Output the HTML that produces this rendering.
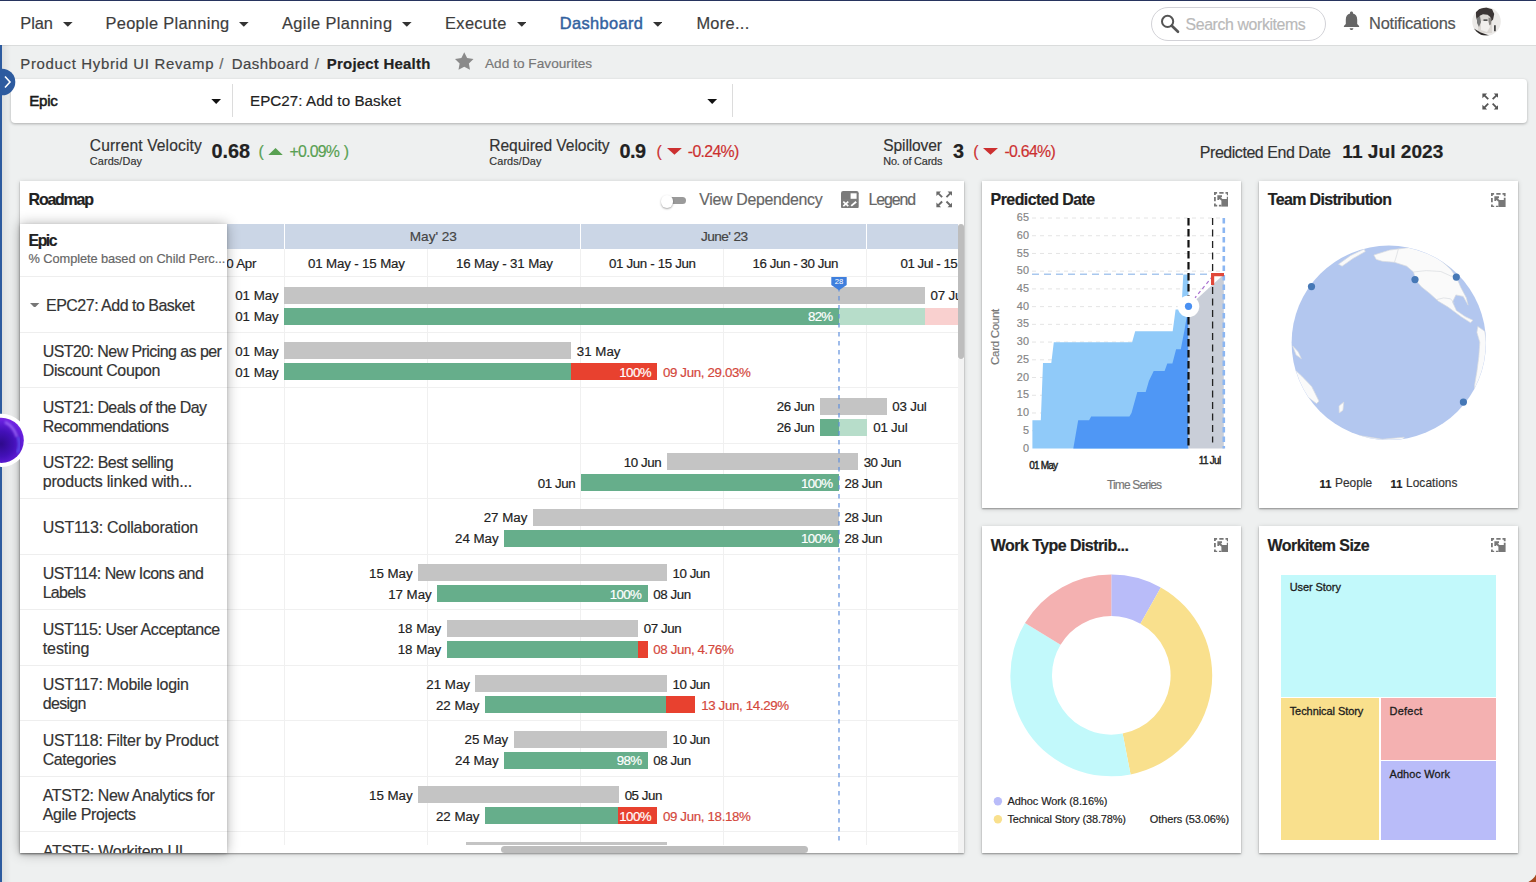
<!DOCTYPE html>
<html lang="en"><head><meta charset="utf-8"><title>Project Health - Dashboard</title><style>
html,body{margin:0;padding:0}
body{width:1536px;height:882px;overflow:hidden;position:relative;background:#eef0f0;font-family:"Liberation Sans",Arial,sans-serif;color:#333}
#page{position:absolute;left:0;top:0;width:1536px;height:882px;overflow:hidden}
#nav{position:absolute;left:0;top:0;width:1536px;height:44.500px;background:#fff;box-shadow:0 1px 0 #dadcdc}
.t{position:absolute;white-space:nowrap;line-height:1em;display:block;-webkit-text-stroke:.18px currentColor}
</style></head>
<body><div id="page">
<div id="nav">
<div style="position:absolute;left:0.00px;top:0.00px;width:1536.00px;height:1.30px;background:#27345e;"></div>
<span class="t" id="t1" style="top:15.42px;font-size:16.40px;left:20.30px;color:#3d3d3d;letter-spacing:-0.071px;">Plan</span>
<svg style="position:absolute;left:63.30px;top:22.00px" width="9.60" height="4.80" viewBox="0 0 10 5"><path d="M0 0H10L5 5Z" fill="#333"/></svg>
<span class="t" id="t2" style="top:15.42px;font-size:16.40px;left:105.50px;color:#3d3d3d;letter-spacing:0.308px;">People Planning</span>
<svg style="position:absolute;left:239.00px;top:22.00px" width="9.60" height="4.80" viewBox="0 0 10 5"><path d="M0 0H10L5 5Z" fill="#333"/></svg>
<span class="t" id="t3" style="top:15.42px;font-size:16.40px;left:282.00px;color:#3d3d3d;letter-spacing:0.400px;">Agile Planning</span>
<svg style="position:absolute;left:402.10px;top:22.00px" width="9.60" height="4.80" viewBox="0 0 10 5"><path d="M0 0H10L5 5Z" fill="#333"/></svg>
<span class="t" id="t4" style="top:15.42px;font-size:16.40px;left:445.10px;color:#3d3d3d;letter-spacing:0.328px;">Execute</span>
<svg style="position:absolute;left:516.70px;top:22.00px" width="9.60" height="4.80" viewBox="0 0 10 5"><path d="M0 0H10L5 5Z" fill="#333"/></svg>
<span class="t" id="t5" style="top:15.42px;font-size:16.40px;left:559.70px;color:#33629f;letter-spacing:0.389px;-webkit-text-stroke:0.45px currentColor;">Dashboard</span>
<svg style="position:absolute;left:652.90px;top:22.00px" width="9.60" height="4.80" viewBox="0 0 10 5"><path d="M0 0H10L5 5Z" fill="#333"/></svg>
<span class="t" id="t6" style="top:15.42px;font-size:16.40px;left:696.40px;color:#3d3d3d;letter-spacing:0.314px;">More...</span>
<div style="position:absolute;left:1151px;top:7px;width:175px;height:33.500px;border:1px solid #d2d2d7;border-radius:17px;box-sizing:border-box;background:#fff"></div>
<svg style="position:absolute;left:1159px;top:13px" width="22" height="22" viewBox="0 0 22 22"><circle cx="8.6" cy="8.4" r="5.6" fill="none" stroke="#555" stroke-width="2"/><path d="M12.8 12.7L19 18.8" stroke="#555" stroke-width="2.6" stroke-linecap="round"/></svg>
<span class="t" id="t7" style="top:16.55px;font-size:15.89px;left:1185.50px;color:#b9b9b9;letter-spacing:-0.390px;">Search workitems</span>
<svg style="position:absolute;left:1342px;top:10px" width="19" height="22" viewBox="0 0 19 22"><path d="M9.5 1.6c.9 0 1.5.6 1.5 1.4v.6c2.6.7 4.2 2.9 4.2 5.8v4.6l1.9 2v1H1.9v-1l1.9-2V9.400c0-2.900 1.600-5.100 4.200-5.800v-.6c0-.8.600-1.400 1.500-1.400z" fill="#666"/><path d="M7.700 18.200h3.600c0 1-.8 1.800-1.800 1.800s-1.800-.8-1.800-1.800z" fill="#666"/></svg>
<span class="t" id="t8" style="top:15.32px;font-size:16.40px;left:1369.00px;color:#555;letter-spacing:-0.207px;">Notifications</span>
<svg style="position:absolute;left:1472px;top:7px" width="29" height="29" viewBox="0 0 29 29"><defs><clipPath id="avc"><circle cx="14.500" cy="14.500" r="14.300"/></clipPath><filter id="avb" x="-20%" y="-20%" width="140%" height="140%"><feGaussianBlur stdDeviation=".75"/></filter></defs><g clip-path="url(#avc)"><rect width="29" height="29" fill="#eceae8"/><g filter="url(#avb)"><path d="M6 6h14v20H6z" fill="#dcd8d4"/><path d="M4.100 10.100L3.900 5 7.300 1.800 14.200.5 20.100 2.300 22.200 6.900 21.100 12.400 19.200 14.200 18.300 10.100 15.600 7.800 11 7.300 7.800 8.700 6.400 12.400 5 13.300z" fill="#3a3634"/><path d="M5 11l3-2 1 6-2 5-2-4z" fill="#777"/><path d="M11.500 12.300h4v2.200h-4z" fill="#555"/><path d="M16.500 10.500l3 1-.5 6-2.500 1z" fill="#8a8683"/><path d="M9 14l7 0 2 6-3 5-6-2z" fill="#f1efed"/><path d="M1.800 21.500L8.700 25.600 17.400 28.400 7.300 28.400 2.500 25z" fill="#2f2c2b"/><path d="M22 18.300h1.800v6H22z" fill="#444"/></g></g></svg>
</div>
<span class="t" id="t9" style="top:57.13px;font-size:14.96px;left:20.30px;color:#444;letter-spacing:0.668px;">Product Hybrid UI Revamp</span>
<span class="t" id="t10" style="top:57.13px;font-size:14.96px;left:219.30px;color:#666;">/</span>
<span class="t" id="t11" style="top:57.13px;font-size:14.96px;left:231.80px;color:#444;letter-spacing:0.455px;">Dashboard</span>
<span class="t" id="t12" style="top:57.13px;font-size:14.96px;left:314.80px;color:#666;">/</span>
<span class="t" id="t13" style="top:57.13px;font-size:14.96px;left:326.80px;font-weight:700;color:#222;letter-spacing:0.227px;">Project Health</span>
<svg style="position:absolute;left:455px;top:52.400px" width="18.500" height="18" viewBox="0 0 20 19"><path d="M10 0l3.100 6.300 6.900 1-5 4.900 1.200 6.800L10 15.800 3.800 19 5 12.200 0 7.300l6.900-1z" fill="#8a8a8a"/></svg>
<span class="t" id="t14" style="top:56.66px;font-size:13.63px;left:485.00px;color:#777;letter-spacing:0.025px;">Add to Favourites</span>
<div style="position:absolute;left:2.20px;top:44.50px;width:9.00px;height:840.00px;background:linear-gradient(90deg,rgba(0,0,0,.07),rgba(0,0,0,0));"></div>
<div style="position:absolute;left:11px;top:79px;width:1516px;height:44px;background:#fff;border-radius:4px;box-shadow:0 1px 3px rgba(0,0,0,.28)"></div>
<span class="t" id="t15" style="top:93.46px;font-size:15.17px;left:29.20px;color:#1a1a1a;letter-spacing:-0.295px;-webkit-text-stroke:0.55px currentColor;">Epic</span>
<svg style="position:absolute;left:211.00px;top:99.00px" width="10.40" height="4.90" viewBox="0 0 10 5"><path d="M0 0H10L5 5Z" fill="#111"/></svg>
<div style="position:absolute;left:232.00px;top:84.00px;width:1.00px;height:33.00px;background:#dcdcdc;"></div>
<span class="t" id="t16" style="top:93.46px;font-size:15.17px;left:250.00px;color:#222;letter-spacing:0.053px;">EPC27: Add to Basket</span>
<svg style="position:absolute;left:707.30px;top:99.00px" width="10.40" height="4.90" viewBox="0 0 10 5"><path d="M0 0H10L5 5Z" fill="#111"/></svg>
<div style="position:absolute;left:732.00px;top:84.00px;width:1.00px;height:33.00px;background:#dcdcdc;"></div>
<svg style="position:absolute;left:1481.60px;top:92.70px" width="16.90" height="16.90" viewBox="0 0 16.90 16.90"><path d="M0.40 0.40L5.13 0.40L0.40 5.13Z" fill="#555"/><path d="M1.60 1.60L6.23 6.23" stroke="#555" stroke-width="1.80"/><path d="M16.50 0.40L11.77 0.40L16.50 5.13Z" fill="#555"/><path d="M15.30 1.60L10.67 6.23" stroke="#555" stroke-width="1.80"/><path d="M0.40 16.50L5.13 16.50L0.40 11.77Z" fill="#555"/><path d="M1.60 15.30L6.23 10.67" stroke="#555" stroke-width="1.80"/><path d="M16.50 16.50L11.77 16.50L16.50 11.77Z" fill="#555"/><path d="M15.30 15.30L10.67 10.67" stroke="#555" stroke-width="1.80"/></svg>
<span class="t" id="t17" style="top:137.81px;font-size:15.58px;left:89.80px;letter-spacing:0.135px;">Current Velocity</span>
<span class="t" id="t18" style="top:156.40px;font-size:10.86px;left:89.80px;letter-spacing:0.113px;">Cards/Day</span>
<span class="t" id="t19" style="top:141.57px;font-size:19.88px;left:211.50px;font-weight:700;color:#222;letter-spacing:-0.052px;">0.68</span>
<span class="t" id="t20" style="top:144.35px;font-size:15.89px;left:258.60px;color:#58a052;">(</span>
<svg style="position:absolute;left:268.20px;top:147.90px" width="15.10" height="7.30" viewBox="0 0 10 10" preserveAspectRatio="none"><path d="M0 10H10L5 0Z" fill="#58a052"/></svg>
<span class="t" id="t21" style="top:144.35px;font-size:15.89px;left:289.60px;color:#58a052;letter-spacing:-0.819px;">+0.09%</span>
<span class="t" id="t22" style="top:144.35px;font-size:15.89px;left:343.80px;color:#58a052;">)</span>
<span class="t" id="t23" style="top:137.81px;font-size:15.58px;left:489.30px;letter-spacing:-0.058px;">Required Velocity</span>
<span class="t" id="t24" style="top:156.40px;font-size:10.86px;left:489.30px;letter-spacing:0.100px;">Cards/Day</span>
<span class="t" id="t25" style="top:141.57px;font-size:19.88px;left:619.50px;font-weight:700;color:#222;letter-spacing:-0.555px;">0.9</span>
<span class="t" id="t26" style="top:144.35px;font-size:15.89px;left:656.50px;color:#cc3030;">(</span>
<svg style="position:absolute;left:666.90px;top:148.40px" width="14.90" height="6.80" viewBox="0 0 10 10" preserveAspectRatio="none"><path d="M0 0H10L5 10Z" fill="#cc3030"/></svg>
<span class="t" id="t27" style="top:144.35px;font-size:15.89px;left:687.80px;color:#cc3030;letter-spacing:-0.682px;">-0.24%)</span>
<span class="t" id="t28" style="top:137.81px;font-size:15.58px;left:883.30px;letter-spacing:-0.131px;">Spillover</span>
<span class="t" id="t29" style="top:156.40px;font-size:10.86px;left:883.30px;letter-spacing:-0.170px;">No. of Cards</span>
<span class="t" id="t30" style="top:141.57px;font-size:19.88px;left:952.90px;font-weight:700;color:#222;">3</span>
<span class="t" id="t31" style="top:144.35px;font-size:15.89px;left:973.20px;color:#cc3030;">(</span>
<svg style="position:absolute;left:983.00px;top:148.40px" width="15.00" height="6.80" viewBox="0 0 10 10" preserveAspectRatio="none"><path d="M0 0H10L5 10Z" fill="#cc3030"/></svg>
<span class="t" id="t32" style="top:144.35px;font-size:15.89px;left:1004.40px;color:#cc3030;letter-spacing:-0.716px;">-0.64%)</span>
<span class="t" id="t33" style="top:144.86px;font-size:15.99px;left:1199.80px;letter-spacing:-0.449px;">Predicted End Date</span>
<span class="t" id="t34" style="top:142.36px;font-size:19.07px;left:1342.30px;font-weight:700;color:#222;letter-spacing:0.030px;">11 Jul 2023</span>
<div style="position:absolute;left:20.00px;top:181.00px;width:944.00px;height:672.00px;background:#fff;box-shadow:0 1px 1.500px rgba(0,0,0,.34),0 1px 5px rgba(0,0,0,.16);"></div>
<div style="position:absolute;left:982.00px;top:181.00px;width:259.00px;height:327.00px;background:#fff;box-shadow:0 1px 1.500px rgba(0,0,0,.34),0 1px 5px rgba(0,0,0,.16);"></div>
<div style="position:absolute;left:1259.00px;top:181.00px;width:259.00px;height:327.00px;background:#fff;box-shadow:0 1px 1.500px rgba(0,0,0,.34),0 1px 5px rgba(0,0,0,.16);"></div>
<div style="position:absolute;left:982.00px;top:526.00px;width:259.00px;height:327.00px;background:#fff;box-shadow:0 1px 1.500px rgba(0,0,0,.34),0 1px 5px rgba(0,0,0,.16);"></div>
<div style="position:absolute;left:1259.00px;top:526.00px;width:259.00px;height:327.00px;background:#fff;box-shadow:0 1px 1.500px rgba(0,0,0,.34),0 1px 5px rgba(0,0,0,.16);"></div>
<span class="t" id="t35" style="top:191.66px;font-size:15.99px;left:28.60px;font-weight:700;color:#222;letter-spacing:-1.238px;">Roadmap</span>
<div style="position:absolute;left:665.00px;top:197.30px;width:20.50px;height:7.20px;background:#9a9a9a;border-radius:4px;"></div>
<div style="position:absolute;left:660.80px;top:195.30px;width:12.40px;height:12.40px;background:#fff;border-radius:50%;box-shadow:0 1px 2px rgba(0,0,0,.35);"></div>
<span class="t" id="t36" style="top:192.05px;font-size:15.89px;left:699.30px;color:#666;letter-spacing:-0.313px;">View Dependency</span>
<svg style="position:absolute;left:841.200px;top:190.800px" width="17.700" height="17.700" viewBox="0 0 17.700 17.700"><rect width="17.700" height="17.700" rx="2.200" fill="#7b7b7b"/><rect x="9.600" y="2.300" width="6" height="5.500" fill="#fff"/><path d="M2.300 10.600L7.300 15.100M7.300 10.600L2.300 15.100" stroke="#fff" stroke-width="1.700"/><path d="M10.200 14.900L15.200 10.700" stroke="#fff" stroke-width="1.900"/><path d="M8.700 8.900V17M0 8.900H17.700" stroke="#888" stroke-width=".5"/></svg>
<span class="t" id="t37" style="top:192.05px;font-size:15.89px;left:868.40px;color:#666;letter-spacing:-1.037px;">Legend</span>
<svg style="position:absolute;left:935.50px;top:191.20px" width="16.60" height="16.60" viewBox="0 0 16.60 16.60"><path d="M0.40 0.40L5.05 0.40L0.40 5.05Z" fill="#6a6a6a"/><path d="M1.60 1.60L6.13 6.13" stroke="#6a6a6a" stroke-width="1.90"/><path d="M16.20 0.40L11.55 0.40L16.20 5.05Z" fill="#6a6a6a"/><path d="M15.00 1.60L10.47 6.13" stroke="#6a6a6a" stroke-width="1.90"/><path d="M0.40 16.20L5.05 16.20L0.40 11.55Z" fill="#6a6a6a"/><path d="M1.60 15.00L6.13 10.47" stroke="#6a6a6a" stroke-width="1.90"/><path d="M16.20 16.20L11.55 16.20L16.20 11.55Z" fill="#6a6a6a"/><path d="M15.00 15.00L10.47 10.47" stroke="#6a6a6a" stroke-width="1.90"/></svg>
<div id="gantt" style="position:absolute;left:227px;top:224px;width:730.6px;height:621px;overflow:hidden">
<div style="position:absolute;left:0.00px;top:0.00px;width:740.00px;height:24.60px;background:#cbd6e6;"></div>
<div style="position:absolute;left:56.65px;top:0.00px;width:1.30px;height:24.60px;background:#fff;"></div>
<div style="position:absolute;left:352.65px;top:0.00px;width:1.30px;height:24.60px;background:#fff;"></div>
<div style="position:absolute;left:638.65px;top:0.00px;width:1.30px;height:24.60px;background:#fff;"></div>
<span class="t" id="m_may" style="top:5.96px;font-size:13.63px;left:182.80px;color:#444;letter-spacing:-0.049px;">May&#x27; 23</span>
<span class="t" id="m_jun" style="top:5.96px;font-size:13.63px;left:473.90px;color:#444;letter-spacing:-0.571px;">June&#x27; 23</span>
<div style="position:absolute;left:56.90px;top:25.00px;width:1.00px;height:620.00px;background:#f0f0f0;"></div>
<div style="position:absolute;left:199.90px;top:25.00px;width:1.00px;height:620.00px;background:#f0f0f0;"></div>
<div style="position:absolute;left:352.90px;top:25.00px;width:1.00px;height:620.00px;background:#f0f0f0;"></div>
<div style="position:absolute;left:495.90px;top:25.00px;width:1.00px;height:620.00px;background:#f0f0f0;"></div>
<div style="position:absolute;left:638.90px;top:25.00px;width:1.00px;height:620.00px;background:#f0f0f0;"></div>
<div style="position:absolute;left:0.00px;top:52.30px;width:740.00px;height:1.00px;background:#f0f0f0;"></div>
<span class="t" id="sub0" style="top:32.82px;font-size:13.32px;left:-56.50px;color:#222;letter-spacing:-0.201px;">16 Apr - 30 Apr</span>
<span class="t" id="sub1" style="top:32.82px;font-size:13.32px;left:81.00px;color:#222;letter-spacing:-0.154px;">01 May - 15 May</span>
<span class="t" id="sub2" style="top:32.82px;font-size:13.32px;left:229.00px;color:#222;letter-spacing:-0.154px;">16 May - 31 May</span>
<span class="t" id="sub3" style="top:32.82px;font-size:13.32px;left:382.00px;color:#222;letter-spacing:-0.342px;">01 Jun - 15 Jun</span>
<span class="t" id="sub4" style="top:32.82px;font-size:13.32px;left:525.50px;color:#222;letter-spacing:-0.413px;">16 Jun - 30 Jun</span>
<span class="t" id="sub5" style="top:32.82px;font-size:13.32px;left:673.50px;color:#222;letter-spacing:-0.492px;">01 Jul - 15 Jul</span>
<div style="position:absolute;left:0.00px;top:107.80px;width:740.00px;height:1.00px;background:#f0f0f0;"></div>
<div style="position:absolute;left:0.00px;top:163.30px;width:740.00px;height:1.00px;background:#f0f0f0;"></div>
<div style="position:absolute;left:0.00px;top:218.80px;width:740.00px;height:1.00px;background:#f0f0f0;"></div>
<div style="position:absolute;left:0.00px;top:274.30px;width:740.00px;height:1.00px;background:#f0f0f0;"></div>
<div style="position:absolute;left:0.00px;top:329.80px;width:740.00px;height:1.00px;background:#f0f0f0;"></div>
<div style="position:absolute;left:0.00px;top:385.30px;width:740.00px;height:1.00px;background:#f0f0f0;"></div>
<div style="position:absolute;left:0.00px;top:440.80px;width:740.00px;height:1.00px;background:#f0f0f0;"></div>
<div style="position:absolute;left:0.00px;top:496.30px;width:740.00px;height:1.00px;background:#f0f0f0;"></div>
<div style="position:absolute;left:0.00px;top:551.80px;width:740.00px;height:1.00px;background:#f0f0f0;"></div>
<div style="position:absolute;left:0.00px;top:607.30px;width:740.00px;height:1.00px;background:#f0f0f0;"></div>
<div style="position:absolute;left:0.00px;top:662.80px;width:740.00px;height:1.00px;background:#f0f0f0;"></div>
<div style="position:absolute;left:57.25px;top:62.80px;width:640.52px;height:16.90px;background:#c4c4c4;"></div>
<span class="t" id="dl_cal" style="top:65.17px;font-size:13.32px;right:678.85px;color:#222;letter-spacing:-0.011px;">01 May</span>
<span class="t" id="t47" style="top:65.17px;font-size:13.32px;left:703.57px;color:#222;letter-spacing:-0.206px;">07 Jul</span>
<div style="position:absolute;left:57.25px;top:83.90px;width:554.48px;height:16.90px;background:#66ae8b;"></div>
<span class="t" id="t48" style="top:86.27px;font-size:13.32px;right:678.85px;color:#222;letter-spacing:-0.011px;">01 May</span>
<div style="position:absolute;left:611.73px;top:83.90px;width:86.04px;height:16.90px;background:#b7ddca;"></div>
<div style="position:absolute;left:697.77px;top:83.90px;width:47.80px;height:16.90px;background:#f9d0cf;"></div>
<span class="t" id="t49" style="top:86.27px;font-size:13.32px;right:125.07px;color:#fff;letter-spacing:-0.678px;">82%</span>
<div style="position:absolute;left:57.25px;top:118.30px;width:286.80px;height:16.90px;background:#c4c4c4;"></div>
<span class="t" id="t50" style="top:120.67px;font-size:13.32px;right:678.85px;color:#222;letter-spacing:-0.011px;">01 May</span>
<span class="t" id="t51" style="top:120.67px;font-size:13.32px;left:349.85px;color:#222;letter-spacing:-0.011px;">31 May</span>
<div style="position:absolute;left:57.25px;top:139.40px;width:286.80px;height:16.90px;background:#66ae8b;"></div>
<span class="t" id="t52" style="top:141.77px;font-size:13.32px;right:678.85px;color:#222;letter-spacing:-0.011px;">01 May</span>
<div style="position:absolute;left:343.65px;top:139.40px;width:86.44px;height:16.90px;background:#e8412f;"></div>
<span class="t" id="t53" style="top:141.77px;font-size:13.32px;right:306.71px;color:#fff;letter-spacing:-0.621px;">100%</span>
<span class="t" id="t54" style="top:141.77px;font-size:13.32px;left:435.89px;color:#d4483c;letter-spacing:-0.341px;">09 Jun, 29.03%</span>
<div style="position:absolute;left:592.61px;top:173.80px;width:66.92px;height:16.90px;background:#c4c4c4;"></div>
<span class="t" id="t55" style="top:176.17px;font-size:13.32px;right:143.49px;color:#222;letter-spacing:-0.437px;">26 Jun</span>
<span class="t" id="t56" style="top:176.17px;font-size:13.32px;left:665.33px;color:#222;letter-spacing:-0.206px;">03 Jul</span>
<div style="position:absolute;left:592.61px;top:194.90px;width:19.12px;height:16.90px;background:#66ae8b;"></div>
<span class="t" id="t57" style="top:197.27px;font-size:13.32px;right:143.49px;color:#222;letter-spacing:-0.437px;">26 Jun</span>
<div style="position:absolute;left:611.73px;top:194.90px;width:28.68px;height:16.90px;background:#b7ddca;"></div>
<span class="t" id="t58" style="top:197.27px;font-size:13.32px;left:646.21px;color:#222;letter-spacing:-0.206px;">01 Jul</span>
<div style="position:absolute;left:439.65px;top:229.30px;width:191.20px;height:16.90px;background:#c4c4c4;"></div>
<span class="t" id="t59" style="top:231.67px;font-size:13.32px;right:296.45px;color:#222;letter-spacing:-0.437px;">10 Jun</span>
<span class="t" id="t60" style="top:231.67px;font-size:13.32px;left:636.65px;color:#222;letter-spacing:-0.437px;">30 Jun</span>
<div style="position:absolute;left:353.61px;top:250.40px;width:258.12px;height:16.90px;background:#66ae8b;"></div>
<span class="t" id="t61" style="top:252.77px;font-size:13.32px;right:382.49px;color:#222;letter-spacing:-0.437px;">01 Jun</span>
<span class="t" id="t62" style="top:252.77px;font-size:13.32px;right:125.07px;color:#fff;letter-spacing:-0.621px;">100%</span>
<span class="t" id="t63" style="top:252.77px;font-size:13.32px;left:617.53px;color:#222;letter-spacing:-0.437px;">28 Jun</span>
<div style="position:absolute;left:305.81px;top:284.80px;width:305.92px;height:16.90px;background:#c4c4c4;"></div>
<span class="t" id="t64" style="top:287.17px;font-size:13.32px;right:430.29px;color:#222;letter-spacing:-0.011px;">27 May</span>
<span class="t" id="t65" style="top:287.17px;font-size:13.32px;left:617.53px;color:#222;letter-spacing:-0.437px;">28 Jun</span>
<div style="position:absolute;left:277.13px;top:305.90px;width:334.60px;height:16.90px;background:#66ae8b;"></div>
<span class="t" id="t66" style="top:308.27px;font-size:13.32px;right:458.97px;color:#222;letter-spacing:-0.011px;">24 May</span>
<span class="t" id="t67" style="top:308.27px;font-size:13.32px;right:125.07px;color:#fff;letter-spacing:-0.621px;">100%</span>
<span class="t" id="t68" style="top:308.27px;font-size:13.32px;left:617.53px;color:#222;letter-spacing:-0.437px;">28 Jun</span>
<div style="position:absolute;left:191.09px;top:340.30px;width:248.56px;height:16.90px;background:#c4c4c4;"></div>
<span class="t" id="t69" style="top:342.67px;font-size:13.32px;right:545.01px;color:#222;letter-spacing:-0.011px;">15 May</span>
<span class="t" id="t70" style="top:342.67px;font-size:13.32px;left:445.45px;color:#222;letter-spacing:-0.437px;">10 Jun</span>
<div style="position:absolute;left:210.21px;top:361.40px;width:210.32px;height:16.90px;background:#66ae8b;"></div>
<span class="t" id="t71" style="top:363.77px;font-size:13.32px;right:525.89px;color:#222;letter-spacing:-0.011px;">17 May</span>
<span class="t" id="t72" style="top:363.77px;font-size:13.32px;right:316.27px;color:#fff;letter-spacing:-0.621px;">100%</span>
<span class="t" id="t73" style="top:363.77px;font-size:13.32px;left:426.33px;color:#222;letter-spacing:-0.437px;">08 Jun</span>
<div style="position:absolute;left:219.77px;top:395.80px;width:191.20px;height:16.90px;background:#c4c4c4;"></div>
<span class="t" id="t74" style="top:398.17px;font-size:13.32px;right:516.33px;color:#222;letter-spacing:-0.011px;">18 May</span>
<span class="t" id="t75" style="top:398.17px;font-size:13.32px;left:416.77px;color:#222;letter-spacing:-0.437px;">07 Jun</span>
<div style="position:absolute;left:219.77px;top:416.90px;width:191.20px;height:16.90px;background:#66ae8b;"></div>
<span class="t" id="t76" style="top:419.27px;font-size:13.32px;right:516.33px;color:#222;letter-spacing:-0.011px;">18 May</span>
<div style="position:absolute;left:410.57px;top:416.90px;width:9.96px;height:16.90px;background:#e8412f;"></div>
<span class="t" id="t77" style="top:419.27px;font-size:13.32px;left:426.33px;color:#d4483c;letter-spacing:-0.394px;">08 Jun, 4.76%</span>
<div style="position:absolute;left:248.45px;top:451.30px;width:191.20px;height:16.90px;background:#c4c4c4;"></div>
<span class="t" id="t78" style="top:453.67px;font-size:13.32px;right:487.65px;color:#222;letter-spacing:-0.011px;">21 May</span>
<span class="t" id="t79" style="top:453.67px;font-size:13.32px;left:445.45px;color:#222;letter-spacing:-0.437px;">10 Jun</span>
<div style="position:absolute;left:258.01px;top:472.40px;width:181.64px;height:16.90px;background:#66ae8b;"></div>
<span class="t" id="t80" style="top:474.77px;font-size:13.32px;right:478.09px;color:#222;letter-spacing:-0.011px;">22 May</span>
<div style="position:absolute;left:439.25px;top:472.40px;width:29.08px;height:16.90px;background:#e8412f;"></div>
<span class="t" id="t81" style="top:474.77px;font-size:13.32px;left:474.13px;color:#d4483c;letter-spacing:-0.341px;">13 Jun, 14.29%</span>
<div style="position:absolute;left:286.69px;top:506.80px;width:152.96px;height:16.90px;background:#c4c4c4;"></div>
<span class="t" id="t82" style="top:509.17px;font-size:13.32px;right:449.41px;color:#222;letter-spacing:-0.011px;">25 May</span>
<span class="t" id="t83" style="top:509.17px;font-size:13.32px;left:445.45px;color:#222;letter-spacing:-0.437px;">10 Jun</span>
<div style="position:absolute;left:277.13px;top:527.90px;width:143.40px;height:16.90px;background:#66ae8b;"></div>
<span class="t" id="t84" style="top:530.27px;font-size:13.32px;right:458.97px;color:#222;letter-spacing:-0.011px;">24 May</span>
<span class="t" id="t85" style="top:530.27px;font-size:13.32px;right:316.27px;color:#fff;letter-spacing:-0.678px;">98%</span>
<span class="t" id="t86" style="top:530.27px;font-size:13.32px;left:426.33px;color:#222;letter-spacing:-0.437px;">08 Jun</span>
<div style="position:absolute;left:191.09px;top:562.30px;width:200.76px;height:16.90px;background:#c4c4c4;"></div>
<span class="t" id="t87" style="top:564.67px;font-size:13.32px;right:545.01px;color:#222;letter-spacing:-0.011px;">15 May</span>
<span class="t" id="t88" style="top:564.67px;font-size:13.32px;left:397.65px;color:#222;letter-spacing:-0.437px;">05 Jun</span>
<div style="position:absolute;left:258.01px;top:583.40px;width:133.84px;height:16.90px;background:#66ae8b;"></div>
<span class="t" id="t89" style="top:585.77px;font-size:13.32px;right:478.09px;color:#222;letter-spacing:-0.011px;">22 May</span>
<div style="position:absolute;left:391.45px;top:583.40px;width:38.64px;height:16.90px;background:#e8412f;"></div>
<span class="t" id="t90" style="top:585.77px;font-size:13.32px;right:306.71px;color:#fff;letter-spacing:-0.621px;">100%</span>
<span class="t" id="t91" style="top:585.77px;font-size:13.32px;left:435.89px;color:#d4483c;letter-spacing:-0.341px;">09 Jun, 18.18%</span>
<div style="position:absolute;left:238.89px;top:617.80px;width:200.76px;height:16.90px;background:#c4c4c4;"></div>
<div style="position:absolute;left:238.89px;top:638.90px;width:200.76px;height:16.90px;background:#66ae8b;"></div>
<span class="t" id="t92" style="top:641.27px;font-size:13.32px;right:497.21px;color:#222;letter-spacing:-0.011px;">20 May</span>
<svg style="position:absolute;left:601.60px;top:53.30px" width="20" height="580" viewBox="0 0 20 580"><path d="M10 10V580" stroke="#5f8fdc" stroke-width="1.200" stroke-dasharray="4.500 4.500"/><path d="M2.300 0H17.700V8L10 13.200L2.300 8Z" fill="#3f7fdd"/><text x="10" y="7.300" font-size="7.600" fill="#fff" text-anchor="middle" font-family="Liberation Sans, sans-serif">28</text></svg>
</div>
<div style="position:absolute;left:957.60px;top:224.00px;width:6.40px;height:134.50px;background:#bdbdbd;border-radius:3px;"></div>
<div style="position:absolute;left:957.60px;top:358.50px;width:6.40px;height:494.50px;background:#f3f3f3;"></div>
<div style="position:absolute;left:501.00px;top:845.60px;width:307.00px;height:7.40px;background:#bdbdbd;border-radius:4px;"></div>
<div id="left" style="position:absolute;left:20px;top:224px;width:207px;height:629px;overflow:hidden;background:#fff;box-shadow:0 0 12px rgba(0,0,0,.30),0 1px 3px rgba(0,0,0,.18)">
<span class="t" id="l_epic" style="top:8.94px;font-size:15.78px;left:8.60px;font-weight:700;color:#222;letter-spacing:-1.466px;">Epic</span>
<span class="t" id="l_sub" style="top:28.55px;font-size:12.81px;left:8.60px;color:#666;letter-spacing:-0.080px;">% Complete based on Child Perc...</span>
<div style="position:absolute;left:0.00px;top:52.30px;width:207.00px;height:1.00px;background:#eeeeee;"></div>
<div style="position:absolute;left:0.00px;top:107.80px;width:207.00px;height:1.00px;background:#eeeeee;"></div>
<div style="position:absolute;left:0.00px;top:163.30px;width:207.00px;height:1.00px;background:#eeeeee;"></div>
<div style="position:absolute;left:0.00px;top:218.80px;width:207.00px;height:1.00px;background:#eeeeee;"></div>
<div style="position:absolute;left:0.00px;top:274.30px;width:207.00px;height:1.00px;background:#eeeeee;"></div>
<div style="position:absolute;left:0.00px;top:329.80px;width:207.00px;height:1.00px;background:#eeeeee;"></div>
<div style="position:absolute;left:0.00px;top:385.30px;width:207.00px;height:1.00px;background:#eeeeee;"></div>
<div style="position:absolute;left:0.00px;top:440.80px;width:207.00px;height:1.00px;background:#eeeeee;"></div>
<div style="position:absolute;left:0.00px;top:496.30px;width:207.00px;height:1.00px;background:#eeeeee;"></div>
<div style="position:absolute;left:0.00px;top:551.80px;width:207.00px;height:1.00px;background:#eeeeee;"></div>
<div style="position:absolute;left:0.00px;top:607.30px;width:207.00px;height:1.00px;background:#eeeeee;"></div>
<div style="position:absolute;left:0.00px;top:662.80px;width:207.00px;height:1.00px;background:#eeeeee;"></div>
<span class="t" id="lab0_0" style="top:73.96px;font-size:15.99px;left:26.00px;letter-spacing:-0.504px;">EPC27: Add to Basket</span>
<span class="t" id="lab1_0" style="top:120.06px;font-size:15.99px;left:22.70px;letter-spacing:-0.566px;">UST20: New Pricing as per</span>
<span class="t" id="lab1_1" style="top:139.06px;font-size:15.99px;left:22.70px;letter-spacing:-0.352px;">Discount Coupon</span>
<span class="t" id="lab2_0" style="top:175.56px;font-size:15.99px;left:22.70px;letter-spacing:-0.563px;">UST21: Deals of the Day</span>
<span class="t" id="lab2_1" style="top:194.56px;font-size:15.99px;left:22.70px;letter-spacing:-0.499px;">Recommendations</span>
<span class="t" id="lab3_0" style="top:231.06px;font-size:15.99px;left:22.70px;letter-spacing:-0.526px;">UST22: Best selling</span>
<span class="t" id="lab3_1" style="top:250.06px;font-size:15.99px;left:22.70px;letter-spacing:-0.187px;">products linked with...</span>
<span class="t" id="lab4_0" style="top:295.96px;font-size:15.99px;left:22.70px;letter-spacing:-0.252px;">UST113: Collaboration</span>
<span class="t" id="lab5_0" style="top:342.06px;font-size:15.99px;left:22.70px;letter-spacing:-0.549px;">UST114: New Icons and</span>
<span class="t" id="lab5_1" style="top:361.06px;font-size:15.99px;left:22.70px;letter-spacing:-0.742px;">Labels</span>
<span class="t" id="lab6_0" style="top:397.56px;font-size:15.99px;left:22.70px;letter-spacing:-0.440px;">UST115: User Acceptance</span>
<span class="t" id="lab6_1" style="top:416.56px;font-size:15.99px;left:22.70px;letter-spacing:-0.068px;">testing</span>
<span class="t" id="lab7_0" style="top:453.06px;font-size:15.99px;left:22.70px;letter-spacing:-0.281px;">UST117: Mobile login</span>
<span class="t" id="lab7_1" style="top:472.06px;font-size:15.99px;left:22.70px;letter-spacing:-0.662px;">design</span>
<span class="t" id="lab8_0" style="top:508.56px;font-size:15.99px;left:22.70px;letter-spacing:-0.276px;">UST118: Filter by Product</span>
<span class="t" id="lab8_1" style="top:527.56px;font-size:15.99px;left:22.70px;letter-spacing:-0.424px;">Categories</span>
<span class="t" id="lab9_0" style="top:564.06px;font-size:15.99px;left:22.70px;letter-spacing:-0.345px;">ATST2: New Analytics for</span>
<span class="t" id="lab9_1" style="top:583.06px;font-size:15.99px;left:22.70px;letter-spacing:-0.333px;">Agile Projects</span>
<span class="t" id="lab10_0" style="top:619.56px;font-size:15.99px;left:22.70px;letter-spacing:-0.262px;">ATST5: Workitem UI</span>
<svg style="position:absolute;left:10.200px;top:78.600px" width="9.400" height="4.800" viewBox="0 0 10 5"><path d="M0 0H10L5 5Z" fill="#777"/></svg>
</div>
<span class="t" id="t114" style="top:191.51px;font-size:15.99px;left:990.60px;font-weight:700;color:#222;letter-spacing:-0.564px;">Predicted Date</span>
<svg style="position:absolute;left:1213.60px;top:192.30px" width="14.600" height="14.600" viewBox="0 0 14.600 14.600"><path d="M.9 3.100V.9H3.100M5.300 .9H9.600M11.500 .9H13.700V3.200M.9 4.900V9.300M.9 11.500V13.700H3.200M4.900 13.700H7.400M13.700 4.700V7" fill="none" stroke="#777" stroke-width="1.800"/><rect x="7.400" y="7" width="7.200" height="7.600" fill="#777"/><path d="M4.300 8V4.300H8M4.300 4.300L8 8" stroke="#777" stroke-width="1.900" fill="none"/></svg>
<svg style="position:absolute;left:982px;top:181px" width="259" height="327" viewBox="982 181 259 327"><path d="M1032 430.70H1223" stroke="#e4e4e4" stroke-width="1" stroke-dasharray="4 4"/><path d="M1032 412.98H1223" stroke="#e4e4e4" stroke-width="1" stroke-dasharray="4 4"/><path d="M1032 395.25H1223" stroke="#e4e4e4" stroke-width="1" stroke-dasharray="4 4"/><path d="M1032 377.52H1223" stroke="#e4e4e4" stroke-width="1" stroke-dasharray="4 4"/><path d="M1032 359.80H1223" stroke="#e4e4e4" stroke-width="1" stroke-dasharray="4 4"/><path d="M1032 342.07H1223" stroke="#e4e4e4" stroke-width="1" stroke-dasharray="4 4"/><path d="M1032 324.35H1223" stroke="#e4e4e4" stroke-width="1" stroke-dasharray="4 4"/><path d="M1032 306.62H1223" stroke="#e4e4e4" stroke-width="1" stroke-dasharray="4 4"/><path d="M1032 288.90H1223" stroke="#e4e4e4" stroke-width="1" stroke-dasharray="4 4"/><path d="M1032 271.18H1223" stroke="#e4e4e4" stroke-width="1" stroke-dasharray="4 4"/><path d="M1032 253.45H1223" stroke="#e4e4e4" stroke-width="1" stroke-dasharray="4 4"/><path d="M1032 235.72H1223" stroke="#e4e4e4" stroke-width="1" stroke-dasharray="4 4"/><path d="M1032 218.00H1223" stroke="#e4e4e4" stroke-width="1" stroke-dasharray="4 4"/><path d="M1032.4 448.4 L1032.4 420.2 L1040.8 420.2 L1043.0 363.1 L1051.3 363.1 L1053.8 342.2 L1132.1 342.2 L1135.2 331.2 L1172.7 331.2 L1175.6 309.5 L1181.4 309.5 L1183.3 274.4 L1188.5 274.4 L1188.5 448.4 Z" fill="#90caf9"/><path d="M1073.3 448.4 L1078.2 420.2 L1089.1 420.2 L1091.2 416.6 L1129.4 416.6 L1131.5 412.9 L1137.3 391.9 L1145.7 391.9 L1148.9 381.0 L1153.7 370.9 L1164.6 370.9 L1167.3 363.6 L1172.4 363.6 L1176.1 349.3 L1180.8 349.3 L1184.5 330.0 L1188.5 306.5 L1188.5 448.4 Z" fill="#4f97f5"/><path d="M1188.500 306.500L1223.800 274.400V448.4H1188.500Z" fill="#c9ced8"/><path d="M1032 274.200H1223" stroke="#a9c8ee" stroke-width="1.500" stroke-dasharray="7 5"/><path d="M1190 304L1212 277" stroke="#a86fd0" stroke-width="1.200" stroke-dasharray="3.500 3"/><path d="M1188.500 218V448.4" stroke="#111" stroke-width="2.200" stroke-dasharray="7.500 3.500"/><path d="M1212.600 218V442.4" stroke="#222" stroke-width="1.300" stroke-dasharray="7 4.500"/><path d="M1223.800 218V448.4" stroke="#8bb6f2" stroke-width="2.600" stroke-dasharray="5.500 4"/><path d="M1212.600 285V274.600H1224" stroke="#e0483a" stroke-width="3.200" fill="none"/><circle cx="1188.500" cy="306.300" r="10.800" fill="#fff"/><circle cx="1188.500" cy="306.300" r="3.600" fill="#4a90f2"/></svg>
<span class="t" id="yl0" style="top:442.53px;font-size:10.86px;right:506.70px;color:#858585;letter-spacing:0.206px;">0</span>
<span class="t" id="yl5" style="top:424.80px;font-size:10.86px;right:506.70px;color:#858585;letter-spacing:0.206px;">5</span>
<span class="t" id="yl10" style="top:407.08px;font-size:10.86px;right:506.70px;color:#858585;letter-spacing:0.206px;">10</span>
<span class="t" id="yl15" style="top:389.35px;font-size:10.86px;right:506.70px;color:#858585;letter-spacing:0.206px;">15</span>
<span class="t" id="yl20" style="top:371.63px;font-size:10.86px;right:506.70px;color:#858585;letter-spacing:0.206px;">20</span>
<span class="t" id="yl25" style="top:353.90px;font-size:10.86px;right:506.70px;color:#858585;letter-spacing:0.206px;">25</span>
<span class="t" id="yl30" style="top:336.18px;font-size:10.86px;right:506.70px;color:#858585;letter-spacing:0.206px;">30</span>
<span class="t" id="yl35" style="top:318.45px;font-size:10.86px;right:506.70px;color:#858585;letter-spacing:0.206px;">35</span>
<span class="t" id="yl40" style="top:300.73px;font-size:10.86px;right:506.70px;color:#858585;letter-spacing:0.206px;">40</span>
<span class="t" id="yl45" style="top:283.00px;font-size:10.86px;right:506.70px;color:#858585;letter-spacing:0.206px;">45</span>
<span class="t" id="yl50" style="top:265.28px;font-size:10.86px;right:506.70px;color:#858585;letter-spacing:0.206px;">50</span>
<span class="t" id="yl55" style="top:247.55px;font-size:10.86px;right:506.70px;color:#858585;letter-spacing:0.206px;">55</span>
<span class="t" id="yl60" style="top:229.83px;font-size:10.86px;right:506.70px;color:#858585;letter-spacing:0.206px;">60</span>
<span class="t" id="yl65" style="top:212.10px;font-size:10.86px;right:506.70px;color:#858585;letter-spacing:0.206px;">65</span>
<span class="t" id="t129" style="top:460.50px;font-size:10.04px;left:1029.30px;color:#222;letter-spacing:-0.841px;-webkit-text-stroke:0.4px currentColor;">01 May</span>
<span class="t" id="t130" style="top:455.70px;font-size:10.04px;left:1198.80px;color:#222;letter-spacing:-0.726px;-webkit-text-stroke:0.4px currentColor;">11 Jul</span>
<span class="t" id="t131" style="top:478.85px;font-size:11.99px;left:1106.90px;color:#777;letter-spacing:-0.830px;">Time Series</span>
<span class="t" id="cc" style="left:995.700px;top:336.600px;font-size:11.500px;color:#777;transform:translate(-50%,-50%) rotate(-90deg);letter-spacing:-0.300px">Card Count</span>
<span class="t" id="t132" style="top:191.51px;font-size:15.99px;left:1267.80px;font-weight:700;color:#222;letter-spacing:-0.656px;">Team Distribution</span>
<svg style="position:absolute;left:1491.20px;top:192.60px" width="14.600" height="14.600" viewBox="0 0 14.600 14.600"><path d="M.9 3.100V.9H3.100M5.300 .9H9.600M11.500 .9H13.700V3.200M.9 4.900V9.300M.9 11.500V13.700H3.200M4.900 13.700H7.400M13.700 4.700V7" fill="none" stroke="#777" stroke-width="1.800"/><rect x="7.400" y="7" width="7.200" height="7.600" fill="#777"/><path d="M4.300 8V4.300H8M4.300 4.300L8 8" stroke="#777" stroke-width="1.900" fill="none"/></svg>
<svg style="position:absolute;left:1259px;top:181px" width="259" height="327" viewBox="1259 181 259 327"><defs><clipPath id="gc"><circle cx="1388.800" cy="342.800" r="97"/></clipPath></defs><circle cx="1388.800" cy="342.800" r="97.200" fill="#b3c7ef"/><g clip-path="url(#gc)" fill="#fafafa" stroke="#d9dbe0" stroke-width=".7"><polygon points="1373.8,255.0 1389.6,250.1 1411.6,247.2 1426.2,250.1 1438.4,258.1 1450.5,269.1 1456.6,277.6 1460.8,287.4 1466.4,297.9 1468.1,305.2 1463.2,296.4 1455.9,294.9 1452.5,302.0 1456.4,310.5 1465.2,316.6 1473.0,320.3 1470.5,322.7 1461.5,316.9 1455.4,312.5 1448.1,307.1 1438.4,301.3 1429.8,293.5 1421.3,286.7 1415.9,280.3 1413.5,272.0 1406.7,266.2 1394.5,262.3 1382.3,261.3 1376.2,259.4"/><polygon points="1477.8,326.4 1484.7,331.2 1487.1,344.6 1485.1,361.7 1480.3,378.7 1474.9,393.4 1474.4,386.1 1476.9,371.4 1478.8,356.8 1479.8,342.2 1476.9,332.5"/><polygon points="1292.7,367.8 1301.9,376.3 1311.7,386.5 1319.0,401.2 1316.5,403.6 1306.8,396.3 1298.3,384.1 1292.2,373.9"/><polygon points="1339.0,406.0 1343.8,402.1 1342.9,410.4 1339.2,412.9"/><polygon points="1292.7,345.9 1298.3,351.9 1301.4,358.8 1296.1,354.9"/><polygon points="1338.5,264.2 1350.7,255.5 1364.1,249.1 1365.3,251.6 1353.1,258.4 1342.1,266.2"/><polygon points="1358.0,435.3 1382.3,439.2 1404.3,437.2 1401.8,440.9 1382.3,442.1 1360.4,438.4"/><polyline fill="none" points="1413.5,272.0 1426.2,270.6 1440.8,271.5 1450.5,275.9 1455.9,276.9"/><polyline fill="none" points="1435.9,299.8 1443.7,297.9 1450.5,298.8 1454.4,303.2"/><polyline fill="none" points="1394.5,262.3 1396.9,254.5 1398.4,248.6"/></g><circle cx="1311.5" cy="286.6" r="3.600" fill="#4678b6"/><circle cx="1415.0" cy="279.6" r="3.600" fill="#4678b6"/><circle cx="1456.3" cy="277.1" r="3.600" fill="#4678b6"/><circle cx="1463.4" cy="402.1" r="3.600" fill="#4678b6"/></svg>
<span class="t" id="t133" style="top:478.84px;font-size:11.17px;left:1319.60px;font-weight:700;color:#222;">11</span>
<span class="t" id="t134" style="top:478.24px;font-size:11.89px;left:1335.00px;letter-spacing:0.043px;">People</span>
<span class="t" id="t135" style="top:478.84px;font-size:11.17px;left:1390.60px;font-weight:700;color:#222;">11</span>
<span class="t" id="t136" style="top:478.24px;font-size:11.89px;left:1406.00px;letter-spacing:0.082px;">Locations</span>
<span class="t" id="t137" style="top:537.66px;font-size:15.99px;left:990.80px;font-weight:700;color:#222;letter-spacing:-0.554px;">Work Type Distrib...</span>
<svg style="position:absolute;left:1213.60px;top:537.80px" width="14.600" height="14.600" viewBox="0 0 14.600 14.600"><path d="M.9 3.100V.9H3.100M5.300 .9H9.600M11.500 .9H13.700V3.200M.9 4.900V9.300M.9 11.500V13.700H3.200M4.900 13.700H7.400M13.700 4.700V7" fill="none" stroke="#777" stroke-width="1.800"/><rect x="7.400" y="7" width="7.200" height="7.600" fill="#777"/><path d="M4.300 8V4.300H8M4.300 4.300L8 8" stroke="#777" stroke-width="1.900" fill="none"/></svg>
<svg style="position:absolute;left:982px;top:526px" width="259" height="327" viewBox="982 526 259 327"><path d="M1111.30 574.50A100.90 100.90 0 0 1 1160.80 587.47L1140.39 623.72A59.30 59.30 0 0 0 1111.30 616.10Z" fill="#b9bcf9"/><path d="M1160.80 587.47A100.90 100.90 0 0 1 1130.58 774.44L1122.63 733.61A59.30 59.30 0 0 0 1140.39 623.72Z" fill="#f9e08d"/><path d="M1130.58 774.44A100.90 100.90 0 0 1 1025.00 623.11L1060.58 644.67A59.30 59.30 0 0 0 1122.63 733.61Z" fill="#c2f9fb"/><path d="M1025.00 623.11A100.90 100.90 0 0 1 1111.30 574.50L1111.30 616.10A59.30 59.30 0 0 0 1060.58 644.67Z" fill="#f4b1b1"/><circle cx="997.900" cy="801.300" r="4.200" fill="#b9bcf9"/><circle cx="997.900" cy="819.200" r="4.200" fill="#f9e08d"/></svg>
<span class="t" id="t138" style="top:795.82px;font-size:10.97px;left:1007.40px;color:#222;letter-spacing:-0.065px;">Adhoc Work (8.16%)</span>
<span class="t" id="t139" style="top:813.72px;font-size:10.97px;left:1007.40px;color:#222;letter-spacing:-0.145px;">Technical Story (38.78%)</span>
<span class="t" id="t140" style="top:813.72px;font-size:10.97px;left:1149.70px;color:#222;letter-spacing:-0.070px;">Others (53.06%)</span>
<span class="t" id="t141" style="top:537.66px;font-size:15.99px;left:1267.60px;font-weight:700;color:#222;letter-spacing:-0.581px;">Workitem Size</span>
<svg style="position:absolute;left:1491.20px;top:537.80px" width="14.600" height="14.600" viewBox="0 0 14.600 14.600"><path d="M.9 3.100V.9H3.100M5.300 .9H9.600M11.500 .9H13.700V3.200M.9 4.900V9.300M.9 11.500V13.700H3.200M4.900 13.700H7.400M13.700 4.700V7" fill="none" stroke="#777" stroke-width="1.800"/><rect x="7.400" y="7" width="7.200" height="7.600" fill="#777"/><path d="M4.300 8V4.300H8M4.300 4.300L8 8" stroke="#777" stroke-width="1.900" fill="none"/></svg>
<div style="position:absolute;left:1280.50px;top:574.50px;width:215.60px;height:122.40px;background:#c2f9fb;"></div>
<div style="position:absolute;left:1280.50px;top:698.20px;width:98.70px;height:142.00px;background:#f9e08d;"></div>
<div style="position:absolute;left:1380.80px;top:698.20px;width:115.30px;height:61.60px;background:#f4b1b1;"></div>
<div style="position:absolute;left:1380.80px;top:761.40px;width:115.30px;height:78.80px;background:#b9bcf9;"></div>
<span class="t" id="t142" style="top:582.42px;font-size:10.97px;left:1289.70px;color:#1c1c1c;letter-spacing:-0.068px;-webkit-text-stroke:0.3px currentColor;">User Story</span>
<span class="t" id="t143" style="top:705.92px;font-size:10.97px;left:1289.70px;color:#1c1c1c;letter-spacing:-0.056px;-webkit-text-stroke:0.3px currentColor;">Technical Story</span>
<span class="t" id="t144" style="top:705.92px;font-size:10.97px;left:1389.50px;color:#1c1c1c;letter-spacing:0.239px;-webkit-text-stroke:0.3px currentColor;">Defect</span>
<span class="t" id="t145" style="top:769.12px;font-size:10.97px;left:1389.50px;color:#1c1c1c;letter-spacing:0.095px;-webkit-text-stroke:0.3px currentColor;">Adhoc Work</span>
<div style="position:absolute;left:0.00px;top:44.50px;width:2.20px;height:840.00px;background:#2d5b9f;"></div>
<svg style="position:absolute;left:-12px;top:68px" width="28" height="28" viewBox="0 0 28 28"><circle cx="14" cy="14" r="13.300" fill="#2d5b9f"/><path d="M17 8.500L22 14L17 19.500" stroke="#fff" stroke-width="1.600" fill="none"/></svg>
<svg style="position:absolute;left:-26px;top:413px" width="54" height="54" viewBox="0 0 54 54"><defs><radialGradient id="orb" cx=".5" cy=".58" r=".62"><stop offset="0" stop-color="#2e0a8c"/><stop offset=".45" stop-color="#4310b8"/><stop offset=".8" stop-color="#651fdc"/><stop offset="1" stop-color="#8628ea"/></radialGradient><filter id="ob"><feGaussianBlur stdDeviation="1.100"/></filter></defs><circle cx="27.200" cy="27.300" r="26.600" fill="#fff"/><circle cx="27.200" cy="27.300" r="22.600" fill="url(#orb)"/><path d="M31 9c6 3 10 8 12 15" stroke="#a874ff" stroke-width="2.600" fill="none" opacity=".75" filter="url(#ob)"/><path d="M44 24c2 5 2 11-1 16" stroke="#5b55f0" stroke-width="3" fill="none" opacity=".8" filter="url(#ob)"/></svg>
<svg style="position:absolute;left:1520px;top:866px" width="16" height="16" viewBox="0 0 16 16"><path d="M16 0V16H0A16 16 0 0 0 16 0Z" transform="translate(1.500 1.500)" fill="#a6481d"/></svg>
</div></body></html>
